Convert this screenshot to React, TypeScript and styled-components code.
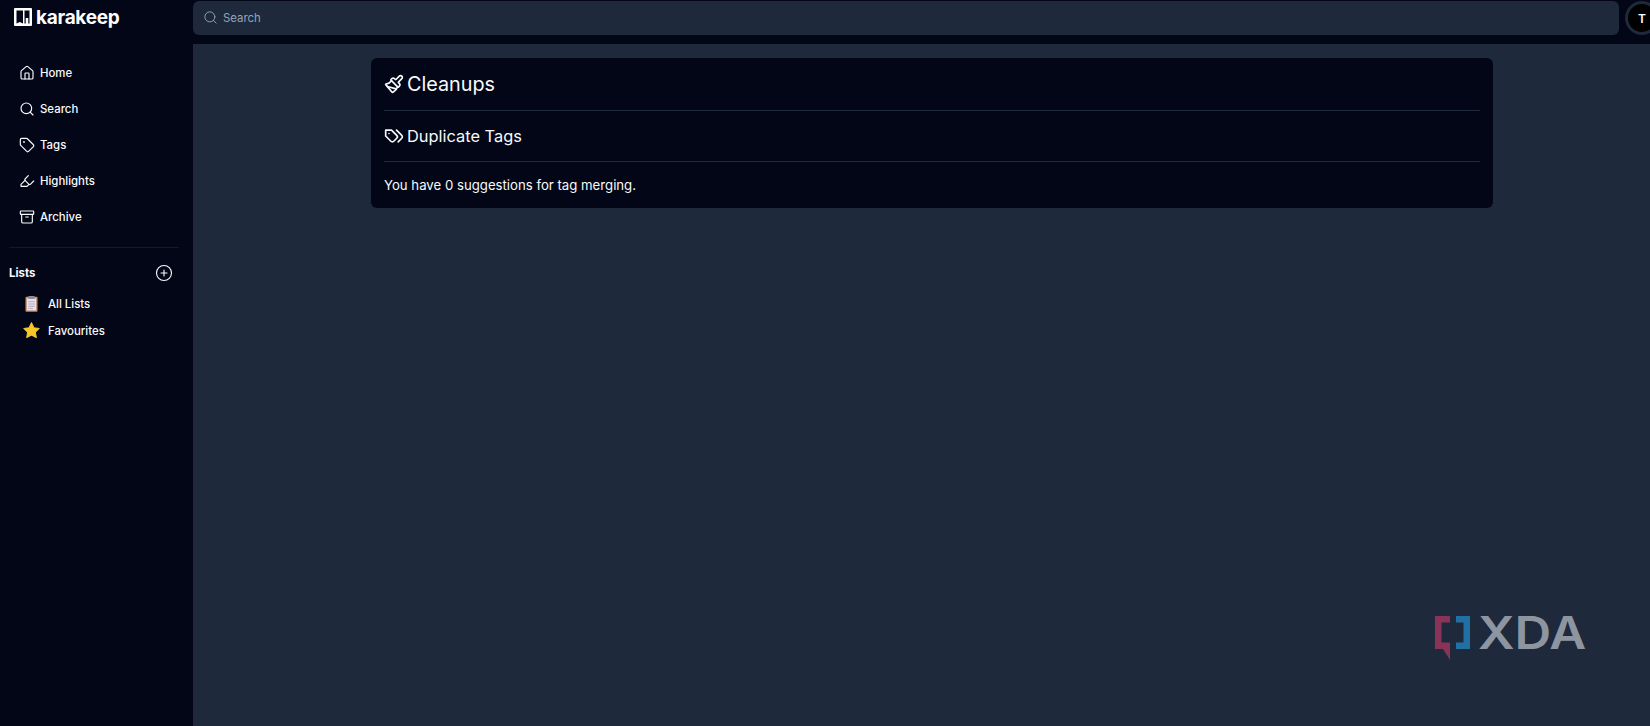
import React from 'react';
import styled, { createGlobalStyle } from 'styled-components';
import { Archive, CirclePlus, Highlighter, House, Paintbrush, Search, Tag } from 'lucide-react';

const GlobalStyle = createGlobalStyle`
  html, body {
    margin: 0;
    padding: 0;
    background: #1e293b;
  }
  body {
    font-family: Inter, "Liberation Sans", sans-serif;
    color: #f8fafc;
  }
  * {
    box-sizing: border-box;
  }
`;

const Page = styled.div`
  position: relative;
  display: grid;
  grid-template-columns: 193px 1fr;
  grid-template-rows: 44px 1fr;
  width: 1650px;
  height: 726px;
  overflow: hidden;
  background: #1e293b;
`;

const Brand = styled.div`
  display: flex;
  align-items: center;
  gap: 4px;
  padding: 0 0 10px 14px;
  background: #020617;
`;

const BrandName = styled.span`
  font-size: 19px;
  font-weight: 700;
  letter-spacing: -0.3px;
  color: #fff;
`;

const TopBar = styled.header`
  display: flex;
  align-items: flex-start;
  gap: 6px;
  padding-top: 1px;
  background: #020617;
`;

const SearchBox = styled.div`
  flex: 1;
  display: flex;
  align-items: center;
  gap: 5px;
  height: 34px;
  padding: 0 0 1px 10px;
  border-radius: 6px;
  background: #1e293b;
  color: #94a3b8;
  font-size: 11.4px;
`;

const Avatar = styled.div`
  flex: none;
  display: flex;
  align-items: center;
  justify-content: center;
  width: 34px;
  height: 34px;
  margin-right: -9px;
  border: 3px solid #1e293b;
  border-radius: 50%;
  background: #000;
  color: #fff;
  font-size: 12px;
  font-weight: 600;
`;

const Sidebar = styled.aside`
  display: flex;
  flex-direction: column;
  padding: 11px 14px 0 9px;
  background: #020617;
`;

const NavList = styled.nav`
  display: flex;
  flex-direction: column;
`;

const NavItem = styled.a`
  display: flex;
  align-items: center;
  gap: 5px;
  height: 36px;
  padding-left: 10px;
  color: #f8fafc;
  font-size: 11.4px;
  font-weight: 500;
`;

const Divider = styled.hr`
  width: 100%;
  margin: 12px 0 0;
  border: 0;
  border-top: 1px solid #111a2b;
`;

const ListsHeader = styled.div`
  display: flex;
  align-items: center;
  justify-content: space-between;
  height: 24px;
  margin-top: 13px;
  padding-right: 6px;
  font-size: 11.4px;
  font-weight: 700;
`;

const ListItem = styled.a`
  display: flex;
  align-items: center;
  gap: 8px;
  height: 26.5px;
  padding-left: 13px;
  color: #f8fafc;
  font-size: 11.4px;
  font-weight: 500;
`;

const EmojiSlot = styled.span`
  display: flex;
  align-items: center;
  justify-content: center;
  width: 18px;
`;

const ListGroup = styled.div`
  display: flex;
  flex-direction: column;
  margin-top: 6px;
`;

const Main = styled.main`
  padding: 14px 157px 0 178px;
`;

const Card = styled.section`
  display: flex;
  flex-direction: column;
  padding: 0 13px;
  border-radius: 6px;
  background: #020617;
`;

const PageTitle = styled.h1`
  display: flex;
  align-items: center;
  gap: 3px;
  height: 52px;
  margin: 0;
  font-size: 19.8px;
  font-weight: 400;
`;

const SectionTitle = styled.h2`
  display: flex;
  align-items: center;
  gap: 3px;
  height: 50px;
  margin: 0;
  font-size: 16.4px;
  font-weight: 400;
`;

const Rule = styled.hr`
  width: 100%;
  margin: 0;
  border: 0;
  border-top: 1px solid #1e293b;
`;

const Message = styled.p`
  margin: 0;
  padding: 15px 0 14px;
  font-size: 13.2px;
  line-height: 17px;
`;

const Watermark = styled.div`
  position: absolute;
  left: 1435px;
  top: 616px;
  display: flex;
  align-items: flex-start;
  gap: 5px;
`;

const WatermarkText = styled.span`
  display: block;
  font-size: 45px;
  line-height: 34px;
  font-weight: 600;
  color: #8d95a1;
  transform: scaleX(1.13);
  transform-origin: left top;
`;

const BrandMark = () => (
  <svg width="18" height="18" viewBox="0 0 18 18">
    <rect width="18" height="18" rx="1" fill="#fff" />
    <path d="M2.5 2.5h6.5v13l-3.2-1.5-3.3 1.5z" fill="#020617" />
    <path d="M10.5 2.5h5v13h-1.2v-5.5h-2.6v5.5h-1.2z" fill="#020617" />
  </svg>
);

const TagsIcon = ({ size }: { size: number }) => (
  <svg
    width={size}
    height={size}
    viewBox="0 0 24 24"
    fill="none"
    stroke="currentColor"
    strokeWidth="2"
    strokeLinecap="round"
    strokeLinejoin="round"
  >
    <path d="M9 5H2v7l6.29 6.29c.94.94 2.48.94 3.42 0l3.58-3.58c.94-.94.94-2.48 0-3.42L9 5Z" />
    <path d="M6 9.01V9" />
    <path d="m15 5 6.3 6.3a2.4 2.4 0 0 1 0 3.4L17 19" />
  </svg>
);

const ClipboardEmoji = () => (
  <svg width="13" height="16" viewBox="0 0 14 17">
    <rect x="0.5" y="0.8" width="13" height="16" rx="1" fill="#c98c62" />
    <rect x="2" y="2.4" width="10" height="13" fill="#e4e2ee" />
    <rect x="3.5" y="0" width="7" height="3" rx="0.8" fill="#8c8c9e" />
    <path d="M3.5 6h7M3.5 8.5h7M3.5 11h7M3.5 13.3h5" stroke="#a8a6b8" strokeWidth="0.9" />
  </svg>
);

const StarEmoji = () => (
  <svg width="17" height="17" viewBox="0 0 16 16">
    <path
      d="M8 .8l2.2 4.6 5 .7-3.6 3.5.9 5L8 12.2l-4.5 2.4.9-5L.8 6.1l5-.7z"
      fill="#f8c626"
      stroke="#f8c626"
      strokeWidth="1"
      strokeLinejoin="round"
    />
  </svg>
);

const XdaBrackets = () => (
  <svg width="38" height="46" viewBox="0 0 38 46">
    <path d="M0 0h15v6.5H6.5v20H15V44l-7-11H0z" fill="#8a3358" />
    <path d="M21 0h14v33H21v-6.5h7.5v-20H21z" fill="#2070a3" />
  </svg>
);

const navItems = [
  { label: 'Home', icon: House },
  { label: 'Search', icon: Search },
  { label: 'Tags', icon: Tag },
  { label: 'Highlights', icon: Highlighter },
  { label: 'Archive', icon: Archive },
];

export default function App() {
  return (
    <Page>
      <GlobalStyle />
      <Brand>
        <BrandMark />
        <BrandName>karakeep</BrandName>
      </Brand>
      <TopBar>
        <SearchBox>
          <Search size={15} strokeWidth={1.5} />
          Search
        </SearchBox>
        <Avatar>T</Avatar>
      </TopBar>
      <Sidebar>
        <NavList>
          {navItems.map(({ label, icon: Icon }) => (
            <NavItem key={label}>
              <Icon size={16} strokeWidth={1.75} />
              {label}
            </NavItem>
          ))}
        </NavList>
        <Divider />
        <ListsHeader>
          Lists
          <CirclePlus size={18} strokeWidth={1.5} />
        </ListsHeader>
        <ListGroup>
          <ListItem>
            <EmojiSlot>
              <ClipboardEmoji />
            </EmojiSlot>
            All Lists
          </ListItem>
          <ListItem>
            <EmojiSlot>
              <StarEmoji />
            </EmojiSlot>
            Favourites
          </ListItem>
        </ListGroup>
      </Sidebar>
      <Main>
        <Card>
          <PageTitle>
            <Paintbrush size={20} />
            Cleanups
          </PageTitle>
          <Rule />
          <SectionTitle>
            <TagsIcon size={20} />
            Duplicate Tags
          </SectionTitle>
          <Rule />
          <Message>You have 0 suggestions for tag merging.</Message>
        </Card>
      </Main>
      <Watermark>
        <XdaBrackets />
        <WatermarkText>XDA</WatermarkText>
      </Watermark>
    </Page>
  );
}
